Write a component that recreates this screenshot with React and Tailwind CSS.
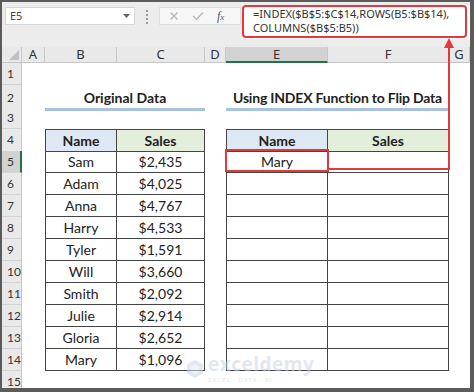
import React from "react";

const COLS = "grid grid-cols-[20px_23px_72px_88px_21px_102px_121px_1fr]";
const data = [
  ["Sam", "$2,435"],
  ["Adam", "$4,025"],
  ["Anna", "$4,767"],
  ["Harry", "$4,533"],
  ["Tyler", "$1,591"],
  ["Will", "$3,660"],
  ["Smith", "$2,092"],
  ["Julie", "$2,914"],
  ["Gloria", "$2,652"],
  ["Mary", "$1,096"],
];

function RowHead({ n, sel }) {
  return (
    <div
      className={
        "flex items-center pl-[5px] text-[12px] text-[#333] border-b border-[#d4d4d4] " +
        (sel ? "bg-[#d2d2d2] border-r-2 border-r-[#217346]" : "bg-[#e9e9e9] border-r border-r-[#c6c6c6]")
      }
    >
      {n}
    </div>
  );
}

function TCell({ children, first, top, bg, bold }) {
  return (
    <div
      className={
        "flex items-center justify-center border-b border-r border-[#454545] text-[14px] text-[#222] " +
        (first ? "border-l " : "") +
        (top ? "border-t " : "") +
        (bg || "") +
        (bold ? " font-bold" : "")
      }
    >
      {children}
    </div>
  );
}

export default function App() {
  const rows = [];
  for (let r = 1; r <= 15; r++) {
    let cells;
    if (r === 2) {
      cells = (
        <>
          <div />
          <div className="col-span-2 flex items-center justify-center font-bold text-[14px] text-[#222] border-b-[3px] border-[#a7c1e2] pt-[2px]">
            Original Data
          </div>
          <div />
          <div className="col-span-2 flex items-center justify-center font-bold text-[14px] text-[#222] border-b-[3px] border-[#a7c1e2] pt-[2px] tracking-[-0.2px]">
            Using INDEX Function to Flip Data
          </div>
          <div />
        </>
      );
    } else if (r === 4) {
      cells = (
        <>
          <div />
          <TCell first top bg="bg-[#dde8f4]" bold>Name</TCell>
          <TCell top bg="bg-[#e3efda]" bold>Sales</TCell>
          <div />
          <TCell first top bg="bg-[#dde8f4]" bold>Name</TCell>
          <TCell top bg="bg-[#e3efda]" bold>Sales</TCell>
          <div />
        </>
      );
    } else if (r >= 5 && r <= 14) {
      const d = data[r - 5];
      cells = (
        <>
          <div />
          <TCell first>{d[0]}</TCell>
          <TCell>{d[1]}</TCell>
          <div />
          <TCell first>{r === 5 ? "Mary" : ""}</TCell>
          <TCell />
          <div />
        </>
      );
    } else {
      cells = null;
    }
    rows.push(
      <div key={r} className={COLS + " h-[22px]"}>
        <RowHead n={r} sel={r === 5} />
        {cells}
      </div>
    );
  }

  const headers = [
    ["A", false],
    ["B", false],
    ["C", false],
    ["D", false],
    ["E", true],
    ["F", false],
    ["G", false],
  ];

  return (
    <div
      className="relative w-[474px] h-[392px] overflow-hidden bg-white border-l-2 border-t-2 border-r-4 border-b-4 border-[#5b5b5b]"
      style={{ fontFamily: "Lato, 'Open Sans', sans-serif" }}
    >
      {/* formula bar */}
      <div
        className="h-[45px] bg-[#ececec] flex items-start"
        style={{ fontFamily: "'Noto Sans', 'Open Sans', sans-serif" }}
      >
        <div className="mt-[5px] ml-[3px] w-[130px] h-[18px] bg-white border border-[#d6d6d6] flex items-center justify-between px-[4px] text-[11px] text-[#444]">
          <span>E5</span>
          <svg width="7" height="4" viewBox="0 0 7 4"><path d="M0 0 H7 L3.5 4 Z" fill="#666" /></svg>
        </div>
        <div className="mt-[8px] w-[24px] flex flex-col items-center gap-[2px]">
          <span className="w-[2px] h-[2px] bg-[#9a9a9a]" />
          <span className="w-[2px] h-[2px] bg-[#9a9a9a]" />
          <span className="w-[2px] h-[2px] bg-[#9a9a9a]" />
          <span className="w-[2px] h-[2px] bg-[#9a9a9a]" />
        </div>
        <div className="mt-[5px] w-[82px] h-[18px] bg-[#f7f7f7] border border-[#dedede] flex items-center pl-[9px] gap-[13px] text-[#aaa]">
          <svg width="10" height="10" viewBox="0 0 10 10"><path d="M1.5 1.5 L8.5 8.5 M8.5 1.5 L1.5 8.5" stroke="#b5b5b5" strokeWidth="1.2" /></svg>
          <svg width="12" height="10" viewBox="0 0 12 10"><path d="M1 5 L4.5 8.5 L11 1.5" stroke="#b5b5b5" strokeWidth="1.2" fill="none" /></svg>
          <span className="italic text-[12px] text-[#555]" style={{ fontFamily: "'Liberation Serif', serif" }}>f<span className="text-[9px]">x</span></span>
        </div>
        <div className="mt-[3px] ml-[1px] flex-1 h-[34px] bg-white pl-[11px] pt-[2px] text-[11px] leading-[14px] text-[#333]">
          <div>=INDEX($B$5:$C$14,ROWS(B5:$B$14),</div>
          <div>COLUMNS($B$5:B5))</div>
        </div>
      </div>

      {/* column headers */}
      <div className={COLS + " h-[16px] text-[13px] text-[#333]"} style={{ fontFamily: "'Noto Sans', sans-serif" }}>
        <div className="bg-[#e9e9e9] border-r border-b border-[#c6c6c6] relative">
          <svg className="absolute right-[2px] bottom-[2px]" width="10" height="10" viewBox="0 0 10 10"><path d="M10 0 V10 H0 Z" fill="#c2c2c2" /></svg>
        </div>
        {headers.map(([h, sel]) => (
          <div
            key={h}
            className={
              "flex items-center justify-center leading-none " +
              (sel
                ? "bg-[#d2d2d2] border-b-2 border-[#217346] border-r border-r-[#c6c6c6]"
                : "bg-[#e9e9e9] border-b border-r border-[#c6c6c6]")
            }
          >
            {h}
          </div>
        ))}
      </div>

      {rows}

      {/* watermark */}
      <div className="absolute left-[183px] top-[352px] flex items-center gap-[3px] opacity-50 pointer-events-none">
        <svg width="20" height="20" viewBox="0 0 20 20">
          <path d="M10 1 L18 5.5 V14.5 L10 19 L2 14.5 V5.5 Z" fill="#c5d2e4" />
          <path d="M10 5 L14.5 7.5 V12.5 L10 15 L5.5 12.5 V7.5 Z" fill="#e2e9f3" />
        </svg>
        <div className="flex flex-col">
          <span className="text-[19px] leading-[20px] font-bold text-[#c5d2e4] tracking-[0.5px]" style={{ fontFamily: "'Open Sans', sans-serif" }}>exceldemy</span>
          <span className="text-[6px] leading-[7px] text-[#c5d2e4] tracking-[1px] mt-[2px]">EXCEL · DATA · BI</span>
        </div>
      </div>

      {/* annotations */}
      <svg className="absolute left-[-2px] top-[-2px] pointer-events-none" width="474" height="392" viewBox="0 0 474 392">
        <rect x="243" y="6" width="223" height="31" rx="3" fill="none" stroke="#e2393f" strokeWidth="2" />
        <rect x="226" y="150" width="102" height="21" fill="none" stroke="#e2393f" strokeWidth="2" />
        <path d="M328 169 H449 V46" fill="none" stroke="#e2393f" strokeWidth="2" />
        <path d="M449 38 L444 48 H454 Z" fill="#e2393f" />
      </svg>
    </div>
  );
}
